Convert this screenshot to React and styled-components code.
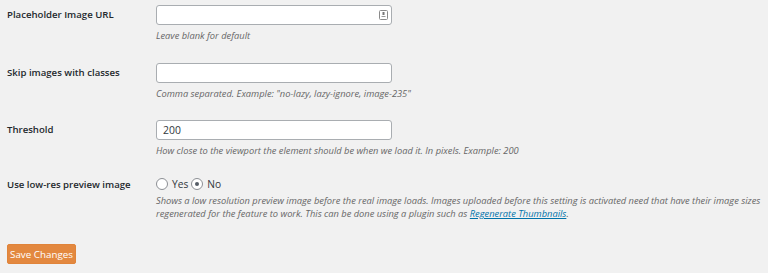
import React, { useState } from 'react';
import styled, { createGlobalStyle } from 'styled-components';

const GlobalStyle = createGlobalStyle`
  html, body {
    margin: 0;
    padding: 0;
    background: #f1f1f1;
  }
  body {
    font-family: 'Open Sans', 'Noto Sans', sans-serif;
    color: #23282d;
  }
`;

const Page = styled.form`
  padding: 5px 0 0 7px;
  width: 768px;
  height: 268px;
  box-sizing: border-box;
`;

const Table = styled.div`
  display: flex;
  flex-direction: column;
`;

const Row = styled.div`
  display: grid;
  grid-template-columns: 149px 1fr;
  padding-bottom: ${(p) => p.gap}px;
`;

const Label = styled.div`
  font-size: 9.6px;
  font-weight: 600;
  color: #23282d;
  line-height: 14px;
  padding-top: ${(p) => p.top ?? 3}px;
`;

const Field = styled.div`
  display: flex;
  flex-direction: column;
`;

const InputWrap = styled.div`
  position: relative;
  width: 236px;
`;

const Input = styled.input`
  display: block;
  width: 236px;
  height: 20px;
  box-sizing: border-box;
  border: 1px solid #a9adb1;
  border-radius: 3px;
  background: #fff;
  padding: 0 6px;
  font-family: inherit;
  font-size: 10.4px;
  color: #32373c;
  outline: none;
`;

const FieldIcon = styled.svg`
  position: absolute;
  right: 4px;
  top: 5px;
`;

const Description = styled.p`
  margin: ${(p) => p.top ?? 4}px 0 0;
  font-size: 9.3px;
  font-style: italic;
  line-height: 13px;
  color: #666;

  a {
    color: #0073aa;
    text-decoration: underline;
  }
`;

const RadioGroup = styled.div`
  display: flex;
  align-items: center;
  gap: 3px;
  height: 14px;
`;

const RadioLabel = styled.label`
  display: flex;
  align-items: center;
  font-size: 10.2px;
  color: #32373c;
  cursor: pointer;
`;

const RadioDot = styled.span`
  width: 10px;
  height: 10px;
  border: 1px solid #8c8f94;
  border-radius: 50%;
  background: #fff;
  margin-right: 4px;
  display: flex;
  align-items: center;
  justify-content: center;

  &::after {
    content: '';
    width: 4px;
    height: 4px;
    border-radius: 50%;
    background: ${(p) => (p.checked ? '#555d66' : 'transparent')};
  }
`;

const SaveButton = styled.button`
  margin-top: 24px;
  width: 69px;
  height: 20px;
  border: 1px solid #e0843a;
  border-radius: 2px;
  background: #e3883f;
  color: #fff;
  font-family: inherit;
  font-size: 9.8px;
  padding: 0;
  cursor: pointer;
`;

const FieldIconSvg = () => (
  <FieldIcon width="9" height="10" viewBox="0 0 9 10">
    <rect x="0.5" y="0.5" width="8" height="9" rx="1" fill="#fff" stroke="#8a8a8a" />
    <rect x="3.5" y="2" width="2" height="3" fill="#777" />
    <rect x="2.5" y="6" width="4" height="1" fill="#999" />
  </FieldIcon>
);

const App = () => {
  const [lowRes, setLowRes] = useState('no');

  return (
    <Page onSubmit={(e) => e.preventDefault()}>
      <GlobalStyle />
      <Table>
        <Row gap={21}>
          <Label>Placeholder Image URL</Label>
          <Field>
            <InputWrap>
              <Input type="text" />
              <FieldIconSvg />
            </InputWrap>
            <Description>Leave blank for default</Description>
          </Field>
        </Row>
        <Row gap={20}>
          <Label>Skip images with classes</Label>
          <Field>
            <Input type="text" />
            <Description>Comma separated. Example: "no-lazy, lazy-ignore, image-235"</Description>
          </Field>
        </Row>
        <Row gap={20}>
          <Label>Threshold</Label>
          <Field>
            <Input type="text" defaultValue="200" />
            <Description>
              How close to the viewport the element should be when we load it. In pixels. Example: 200
            </Description>
          </Field>
        </Row>
        <Row gap={0}>
          <Label top={1}>Use low-res preview image</Label>
          <Field>
            <RadioGroup>
              <RadioLabel onClick={() => setLowRes('yes')}>
                <RadioDot checked={lowRes === 'yes'} />
                Yes
              </RadioLabel>
              <RadioLabel onClick={() => setLowRes('no')}>
                <RadioDot checked={lowRes === 'no'} />
                No
              </RadioLabel>
            </RadioGroup>
            <Description top={3}>
              Shows a low resolution preview image before the real image loads. Images uploaded before this
              setting is activated need that have their image sizes regenerated for the feature to work. This
              can be done using a plugin such as <a href="#">Regenerate Thumbnails</a>.
            </Description>
          </Field>
        </Row>
      </Table>
      <SaveButton type="submit">Save Changes</SaveButton>
    </Page>
  );
};

export default App;
